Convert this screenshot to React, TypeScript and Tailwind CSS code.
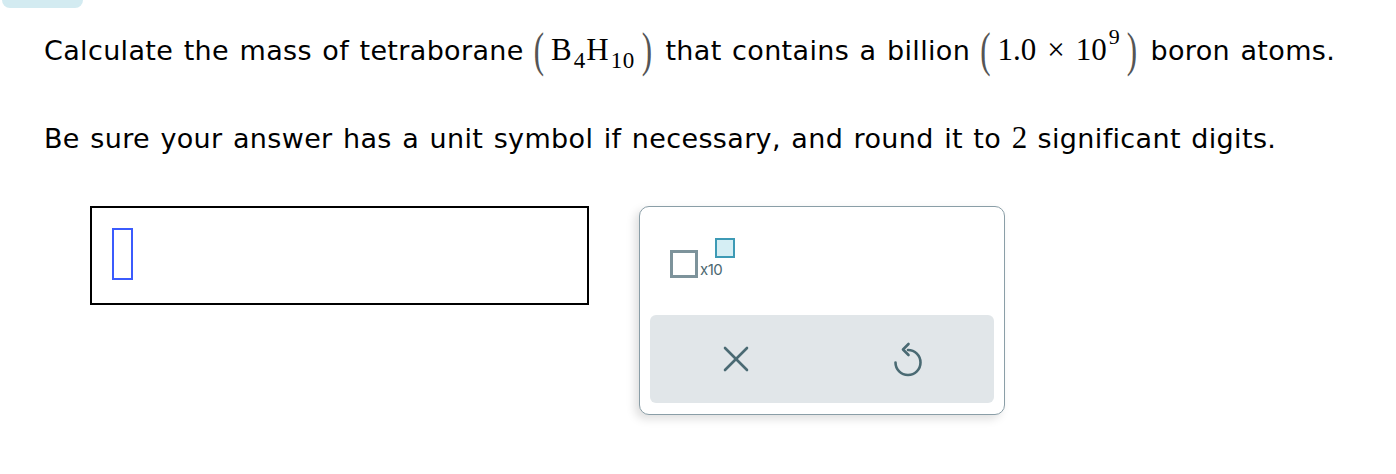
import React from "react";

const serif = { fontFamily: '"Liberation Serif", "Times New Roman", serif' };

function Paren({ side }: { side: "l" | "r" }) {
  return (
    <span
      className={`inline-block text-[31px] leading-none text-[#555] origin-center scale-y-[1.6] tracking-normal ${
        side === "l" ? "ml-[10px] pr-[1px]" : "mr-[3px] pl-[1px]"
      }`}
      style={serif}
    >
      {side === "l" ? "(" : ")"}
    </span>
  );
}

function TimesTenIcon() {
  return (
    <div className="flex items-start">
      <div className="flex items-end mt-[12px]">
        <div className="w-[28px] h-[28px] border-[3px] border-[#7d939b]" />
        <span className="ml-[2px] text-[15px] leading-none text-[#4b6770] font-['Inter',sans-serif] tracking-[-0.5px] mb-[1px]">
          x10
        </span>
      </div>
      <div className="-ml-[7px] w-[20px] h-[20px] border-[2.5px] border-[#3d9ab5] bg-[#d5eef4]" />
    </div>
  );
}

export default function App() {
  return (
    <div className="w-[1396px] h-[474px] bg-white text-black font-['DejaVu_Sans',Verdana,sans-serif]">
      <div className="ml-[2px] w-[81px] h-[8px] rounded-b-[10px] bg-[#d3ebf1]" />

      <div className="pl-[44px]">
        <p className="mt-[18px] text-[27px] tracking-[0.35px] [word-spacing:1.5px] leading-[44px] whitespace-nowrap">
          Calculate the mass of tetraborane
          <Paren side="l" />
          <span className="inline-block text-[31px] leading-none px-[6px] tracking-normal [word-spacing:0px]" style={serif}>
            B<span className="text-[23px] align-[-8px] leading-none pl-[2px] pr-[1px]">4</span>H
            <span className="text-[23px] align-[-8px] leading-none pl-[2px] tracking-[0.5px]">10</span>
          </span>
          <Paren side="r" /> that contains a billion
          <Paren side="l" />
          <span className="inline-block text-[31px] leading-none px-[6px] tracking-normal [word-spacing:0px]" style={serif}>
            1.0<span className="mx-[11px]">×</span>10
            <span className="text-[22px] align-[16px] leading-none pl-[2px]">9</span>
          </span>
          <Paren side="r" /> boron atoms.
        </p>

        <p className="mt-[44px] text-[27px] tracking-[0.35px] [word-spacing:1.5px] leading-[44px] whitespace-nowrap">
          Be sure your answer has a unit symbol if necessary, and round it to{" "}
          <span className="text-[31px] leading-none tracking-normal" style={serif}>
            2
          </span>{" "}
          significant digits.
        </p>

        <div className="mt-[45px] ml-[46px] flex items-start gap-[50px]">
          <div className="w-[499px] h-[99px] border-2 border-black pt-[20px] pl-[20px]">
            <div className="w-[21px] h-[52px] border-2 border-[#3b5bfd]" />
          </div>

          <div className="w-[366px] h-[209px] rounded-[10px] border-[1.5px] border-[#8a9ea7] bg-white shadow-[-4px_4px_10px_rgba(0,0,0,0.13)] flex flex-col">
            <div className="h-[108px] pl-[30px] pt-[31px]">
              <TimesTenIcon />
            </div>
            <div className="mx-[10px] h-[88px] rounded-[6px] bg-[#e1e6e9] flex">
              <button className="flex-1 flex items-center justify-center" aria-label="clear">
                <svg width="28" height="28" viewBox="0 0 28 28" fill="none" stroke="#4a6a73" strokeWidth="2.6" strokeLinecap="round">
                  <path d="M3 3 L25 25" />
                  <path d="M25 3 L3 25" />
                </svg>
              </button>
              <button className="flex-1 flex items-center justify-center" aria-label="undo">
                <svg width="30" height="36" viewBox="0 0 30 36" fill="none" stroke="#4a6a73" strokeWidth="2.6" strokeLinecap="round" strokeLinejoin="round">
                  <path d="M15 9 A12.5 12.5 0 1 1 2.5 21.5" />
                  <path d="M15.5 3 L10 8.5 L15.5 14" />
                </svg>
              </button>
            </div>
          </div>
        </div>
      </div>
    </div>
  );
}
